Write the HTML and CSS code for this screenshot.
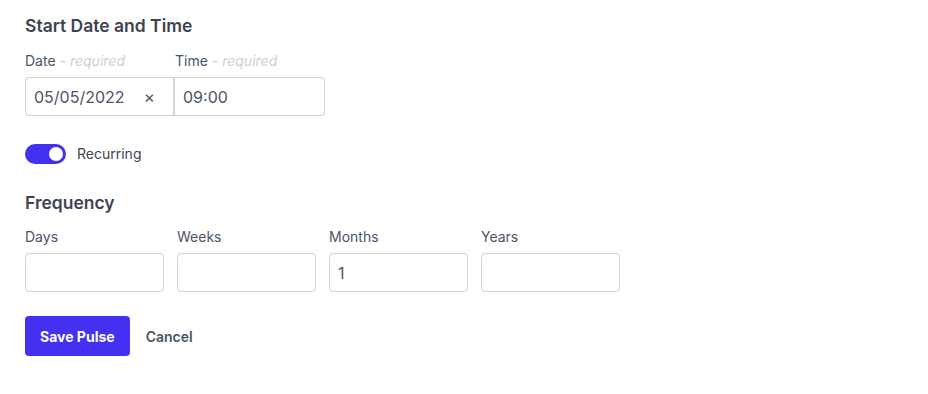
FILE: index.html
```html
<!DOCTYPE html>
<html>
<head>
    <meta charset="utf-8">
    <meta name="viewport" content="width=device-width, initial-scale=1">
    <title>Edit Pulse</title>
    <link rel="stylesheet" href="styles.css">
</head>
<body>
    <form class="pulse-form">
        <h2>Start Date and Time</h2>
        <div class="datetime-row">
            <div class="field">
                <label>Date <span class="hint">- required</span></label>
                <div class="date-box">
                    <input class="plain" type="text" value="05/05/2022">
                    <span class="clear">&times;</span>
                </div>
            </div>
            <div class="field">
                <label>Time <span class="hint">- required</span></label>
                <input class="time-box" type="text" value="09:00">
            </div>
        </div>

        <div class="toggle-row">
            <span class="toggle"><span class="knob"></span></span>
            <span class="toggle-label">Recurring</span>
        </div>

        <h2>Frequency</h2>
        <div class="freq-grid">
            <div class="field">
                <label>Days</label>
                <input class="box" type="text" value="">
            </div>
            <div class="field">
                <label>Weeks</label>
                <input class="box" type="text" value="">
            </div>
            <div class="field">
                <label>Months</label>
                <input class="box" type="text" value="1">
            </div>
            <div class="field">
                <label>Years</label>
                <input class="box" type="text" value="">
            </div>
        </div>

        <div class="actions">
            <button type="button" class="btn-primary">Save Pulse</button>
            <button type="button" class="btn-link">Cancel</button>
        </div>
    </form>
</body>
</html>
```

FILE: styles.css
```css
body { margin: 0; padding: 14px 25px 13px; font-family: Inter, "Noto Sans", sans-serif; color: #4a5568; background: #fff; }
h2 { margin: 0; font-size: 17.5px; line-height: 24px; font-weight: 600; color: #3d4451; }
.field { display: flex; flex-direction: column; }
label { font-size: 14px; line-height: 20px; margin-bottom: 6px; color: #4a5568; }
.hint { font-style: italic; color: #c8cfd8; }
.datetime-row { display: flex; margin-top: 13px; }
.date-box { display: flex; align-items: center; width: 150px; height: 39px; box-sizing: border-box; border: 1px solid #cdd3dc; border-right: 2px solid #cdd3dc; border-radius: 4px 0 0 4px; padding: 0 18px 0 8px; }
.plain { border: 0; outline: 0; flex: 1; min-width: 0; padding: 0; font: inherit; font-size: 16px; color: #4a5568; }
.clear { font-size: 17px; color: #4a5568; }
.time-box { width: 150px; height: 39px; box-sizing: border-box; border: 1px solid #cdd3dc; border-left: 0; border-radius: 0 4px 4px 0; padding: 0 8px; font: inherit; font-size: 16px; color: #4a5568; }
.toggle-row { display: flex; align-items: center; gap: 11px; margin-top: 28px; margin-bottom: 27px; }
.toggle { display: flex; align-items: center; justify-content: flex-end; width: 41px; height: 20px; box-sizing: border-box; padding: 0 3px; border-radius: 10px; background: #4430f0; }
.knob { width: 14px; height: 14px; border-radius: 50%; background: #fff; }
.toggle-label { font-size: 14px; line-height: 20px; color: #3d4451; }
.freq-grid { display: grid; grid-template-columns: repeat(4, 140px); gap: 12px; margin-top: 12px; }
.box { width: 139px; height: 39px; box-sizing: border-box; border: 1px solid #cdd3dc; border-radius: 4px; padding: 0 8px; font: inherit; font-size: 16px; color: #4a5568; }
.actions { display: flex; align-items: center; gap: 16px; margin-top: 24px; }
.btn-primary { height: 40px; padding: 0 15px; border: 0; border-radius: 4px; background: #4430f0; color: #fff; font: inherit; font-size: 14px; font-weight: 700; }
.btn-link { border: 0; background: none; padding: 0; font: inherit; font-size: 14px; font-weight: 600; color: #4a5568; }
```
